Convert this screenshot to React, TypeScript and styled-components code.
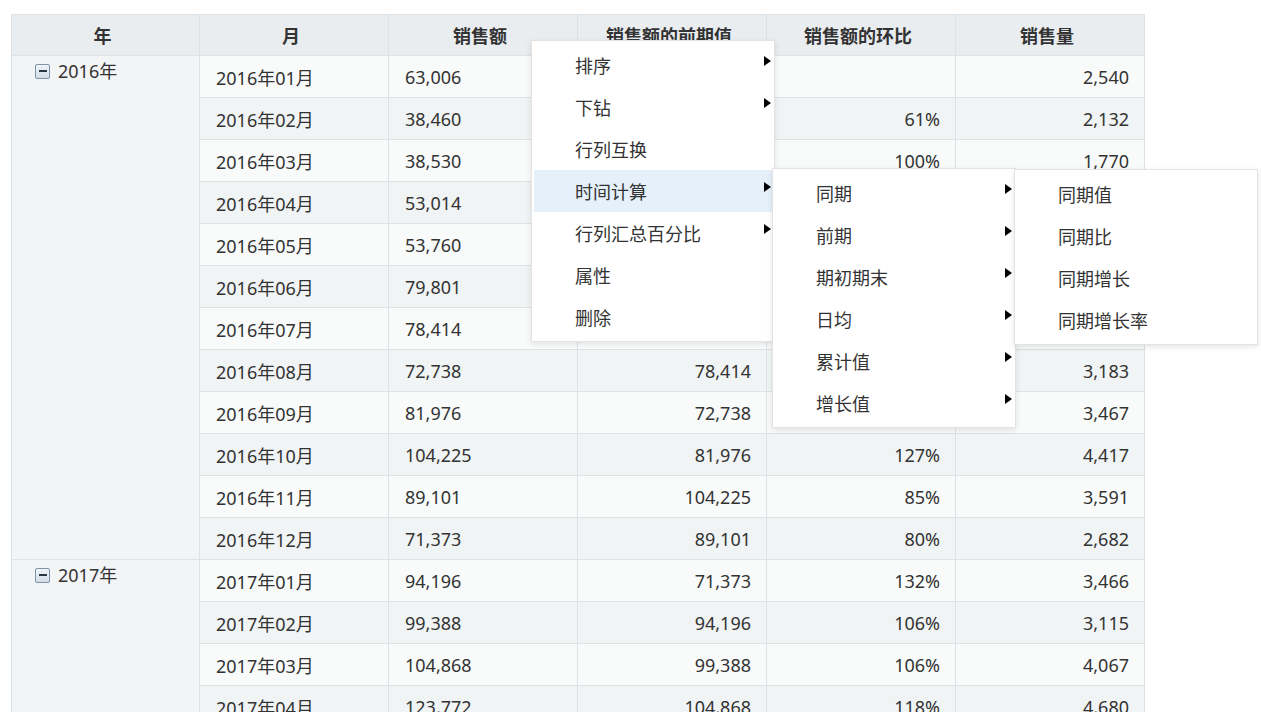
import React from 'react';
import styled, { createGlobalStyle } from 'styled-components';

const GlobalStyle = createGlobalStyle`
    html, body {
        margin: 0;
        padding: 0;
        overflow: hidden;
        background: #ffffff;
    }
    body {
        font-family: "Segoe UI", "Noto Sans", "Noto Sans CJK SC", sans-serif;
        color: #333333;
    }
`;

const Page = styled.div`
    position: relative;
    width: 1261px;
    height: 712px;
    padding: 14px 0 0 11px;
    box-sizing: border-box;
`;

const Table = styled.table`
    width: 1134px;
    border-collapse: collapse;
    table-layout: fixed;
    font-size: 18px;
`;

const HeadCell = styled.th`
    height: 40px;
    padding: 0 19px 0 13px;
    background-color: #e9edf0;
    border: 1px solid #dde2e6;
    font-weight: 700;
    text-align: center;
    color: #333;
`;

const Row = styled.tr<{ $odd: boolean }>`
    height: 42px;
    background-color: ${(p) => (p.$odd ? '#f9fbfb' : '#f1f4f5')};
`;

const YearCell = styled.td`
    vertical-align: top;
    padding: 3px 16px 0 23px;
    background-color: #f3f4f6;
    border: 1px solid #dde2e6;
    white-space: nowrap;
`;

const Cell = styled.td<{ $right?: boolean }>`
    padding: 0 15px 0 16px;
    border: 1px solid #dde2e6;
    text-align: ${(p) => (p.$right ? 'right' : 'left')};
    white-space: nowrap;
`;

const YearLabel = styled.div`
    display: flex;
    align-items: center;
    gap: 8px;
    height: 24px;
    line-height: 24px;
`;

const Toggle = styled.span`
    display: flex;
    align-items: center;
    justify-content: center;
    flex: none;
    width: 13px;
    height: 13px;
    border: 1px solid #7d93aa;
    border-radius: 2px;
    background: linear-gradient(#f0f4f8, #d3dde8);
    &::after {
        content: '';
        width: 8px;
        height: 2px;
        background: #2b3641;
    }
`;

const Menu = styled.div<{ $left: number; $top: number }>`
    position: absolute;
    left: ${(p) => p.$left}px;
    top: ${(p) => p.$top}px;
    width: 244px;
    padding: 3px 2px;
    box-sizing: border-box;
    background: #ffffff;
    border: 1px solid #e3e3e3;
    box-shadow: 0 2px 6px rgba(0, 0, 0, 0.1);
    font-size: 18px;
    color: #333;
`;

const MenuItem = styled.div<{ $active?: boolean }>`
    position: relative;
    height: 42px;
    display: flex;
    align-items: center;
    padding-left: 41px;
    background: ${(p) => (p.$active ? '#e5f0fb' : 'transparent')};
`;

const Arrow = styled.span`
    position: absolute;
    right: 1px;
    top: 12px;
    width: 0;
    height: 0;
    border-top: 5.5px solid transparent;
    border-bottom: 5.5px solid transparent;
    border-left: 7px solid #000;
`;

type Month = { m: string; sales: string; prev: string; ring: string; qty: string };

const years: { year: string; months: Month[] }[] = [
    {
        year: '2016年',
        months: [
            { m: '2016年01月', sales: '63,006', prev: '', ring: '', qty: '2,540' },
            { m: '2016年02月', sales: '38,460', prev: '63,006', ring: '61%', qty: '2,132' },
            { m: '2016年03月', sales: '38,530', prev: '38,460', ring: '100%', qty: '1,770' },
            { m: '2016年04月', sales: '53,014', prev: '38,530', ring: '138%', qty: '2,253' },
            { m: '2016年05月', sales: '53,760', prev: '53,014', ring: '101%', qty: '2,316' },
            { m: '2016年06月', sales: '79,801', prev: '53,760', ring: '148%', qty: '3,402' },
            { m: '2016年07月', sales: '78,414', prev: '79,801', ring: '98%', qty: '3,317' },
            { m: '2016年08月', sales: '72,738', prev: '78,414', ring: '93%', qty: '3,183' },
            { m: '2016年09月', sales: '81,976', prev: '72,738', ring: '113%', qty: '3,467' },
            { m: '2016年10月', sales: '104,225', prev: '81,976', ring: '127%', qty: '4,417' },
            { m: '2016年11月', sales: '89,101', prev: '104,225', ring: '85%', qty: '3,591' },
            { m: '2016年12月', sales: '71,373', prev: '89,101', ring: '80%', qty: '2,682' },
        ],
    },
    {
        year: '2017年',
        months: [
            { m: '2017年01月', sales: '94,196', prev: '71,373', ring: '132%', qty: '3,466' },
            { m: '2017年02月', sales: '99,388', prev: '94,196', ring: '106%', qty: '3,115' },
            { m: '2017年03月', sales: '104,868', prev: '99,388', ring: '106%', qty: '4,067' },
            { m: '2017年04月', sales: '123,772', prev: '104,868', ring: '118%', qty: '4,680' },
        ],
    },
];

const mainMenu = [
    { label: '排序', sub: true },
    { label: '下钻', sub: true },
    { label: '行列互换', sub: false },
    { label: '时间计算', sub: true, active: true },
    { label: '行列汇总百分比', sub: true },
    { label: '属性', sub: false },
    { label: '删除', sub: false },
];

const timeMenu = ['同期', '前期', '期初期末', '日均', '累计值', '增长值'];
const sameMenu = ['同期值', '同期比', '同期增长', '同期增长率'];

const App: React.FC = () => {
    return (
        <Page>
            <GlobalStyle />
            <Table>
                <colgroup>
                    <col style={{ width: 188 }} />
                    <col style={{ width: 189 }} />
                    <col style={{ width: 189 }} />
                    <col style={{ width: 189 }} />
                    <col style={{ width: 189 }} />
                    <col style={{ width: 189 }} />
                </colgroup>
                <thead>
                    <tr>
                        <HeadCell>年</HeadCell>
                        <HeadCell>月</HeadCell>
                        <HeadCell>销售额</HeadCell>
                        <HeadCell>销售额的前期值</HeadCell>
                        <HeadCell>销售额的环比</HeadCell>
                        <HeadCell>销售量</HeadCell>
                    </tr>
                </thead>
                <tbody>
                    {years.map((y) =>
                        y.months.map((row, i) => (
                            <Row key={row.m} $odd={i % 2 === 0}>
                                {i === 0 && (
                                    <YearCell rowSpan={y.months.length}>
                                        <YearLabel>
                                            <Toggle />
                                            {y.year}
                                        </YearLabel>
                                    </YearCell>
                                )}
                                <Cell>{row.m}</Cell>
                                <Cell>{row.sales}</Cell>
                                <Cell $right>{row.prev}</Cell>
                                <Cell $right>{row.ring}</Cell>
                                <Cell $right>{row.qty}</Cell>
                            </Row>
                        ))
                    )}
                </tbody>
            </Table>

            <Menu $left={531} $top={40}>
                {mainMenu.map((item) => (
                    <MenuItem key={item.label} $active={item.active}>
                        {item.label}
                        {item.sub && <Arrow />}
                    </MenuItem>
                ))}
            </Menu>

            <Menu $left={772} $top={168}>
                {timeMenu.map((label) => (
                    <MenuItem key={label}>
                        {label}
                        <Arrow />
                    </MenuItem>
                ))}
            </Menu>

            <Menu $left={1014} $top={169}>
                {sameMenu.map((label) => (
                    <MenuItem key={label}>{label}</MenuItem>
                ))}
            </Menu>
        </Page>
    );
};

export default App;
